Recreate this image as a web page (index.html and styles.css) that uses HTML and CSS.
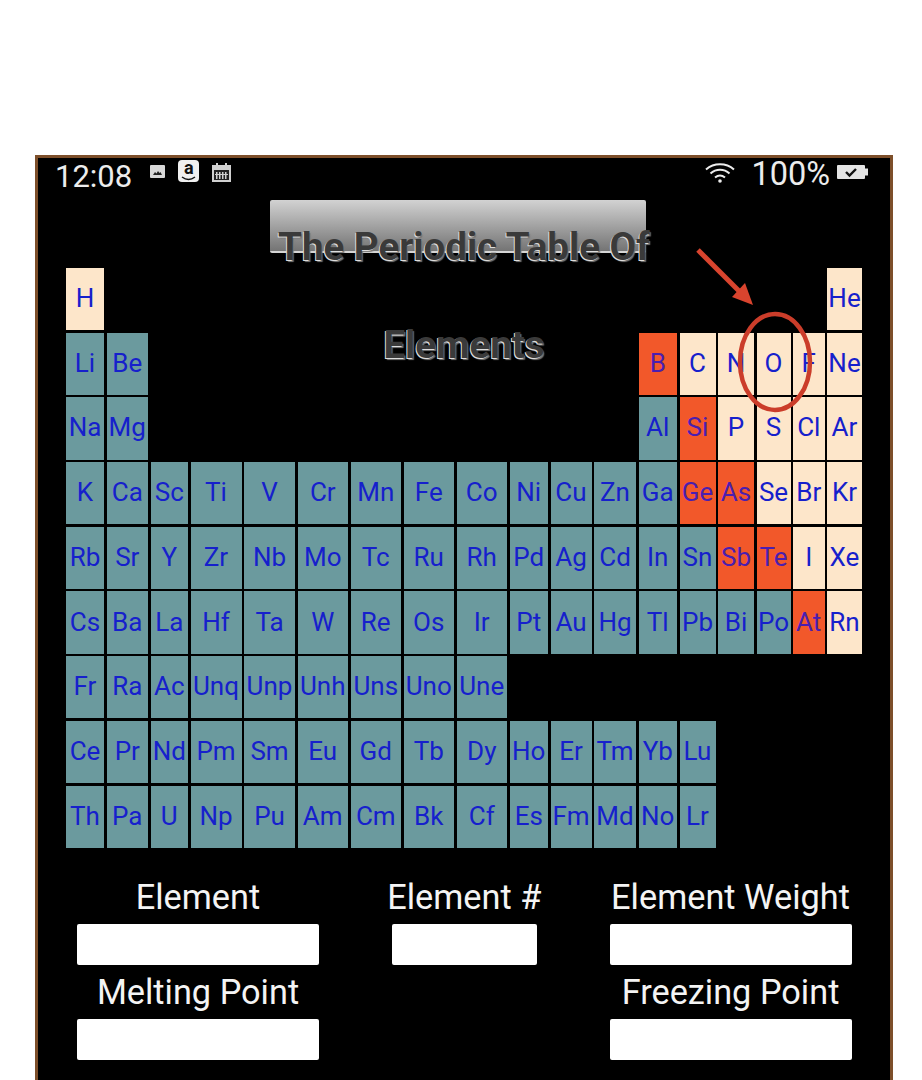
FILE: index.html
```html
<!DOCTYPE html>
<html lang="en">
<head>
<meta charset="utf-8">
<title>The Periodic Table Of Elements</title>
<link rel="stylesheet" href="styles.css">
</head>
<body>
<main class="phone">
  <header class="status">
    <div class="status-left">
      <span class="time">12:08</span>
      <svg class="ico-img" viewBox="0 0 15 13"><rect width="15" height="13" rx="1" fill="#d8d8d8"/><path d="M3 10l2-3 1.500 1.500L8 6l1.500 2 1-1L12 10z" fill="#222"/></svg>
      <span class="ico-amazon"><span class="amazon-a">a</span><svg class="amazon-smile" viewBox="0 0 21 6"><path d="M4 1C8 4 13 4 17 1" fill="none" stroke="#111" stroke-width="1.500"/></svg></span>
      <svg class="ico-cal" viewBox="0 0 19 19"><path d="M4 0h2v2h7V0h2v2h4v17H0V2h4z" fill="#d0d0d0"/><path d="M2 7h15v10H2z" fill="#222"/><path d="M4 9h1.500v7H4zM7 9h1.500v7H7zM10 9h1.500v7H10zM13 9h1.500v7H13zM3 11h13v1H3z" fill="#d0d0d0"/></svg>
    </div>
    <div class="status-right">
      <svg class="ico-wifi" viewBox="0 0 30 21" fill="none" stroke="#ececec" stroke-width="2"><path d="M1 7.500C9 .5 21 .5 29 7.500"/><path d="M5.500 11.500C11 6.500 19 6.500 24.500 11.500"/><path d="M10 15.500C13 13 17 13 20 15.500"/><circle cx="15" cy="19" r="1.800" fill="#ececec" stroke="none"/></svg>
      <span class="batt-pct">100%</span>
      <svg class="ico-batt" viewBox="0 0 31 14"><path d="M0 1a1 1 0 0 1 1-1h26a1 1 0 0 1 1 1v2.500h3v7h-3V13a1 1 0 0 1-1 1H1a1 1 0 0 1-1-1z" fill="#e4e4e4"/><path d="M9 7l3.500 3.500L19 4" fill="none" stroke="#111" stroke-width="2.400"/></svg>
    </div>
  </header>

  <section class="head">
    <div class="title-btn"></div>
    <h1 class="title">The Periodic Table Of<br>Elements</h1>
  </section>

  <section class="table">
    <div class="el n">H</div><div class="el n at18">He</div>
    <div class="el">Li</div><div class="el">Be</div><div class="el s at13">B</div><div class="el n">C</div><div class="el n">N</div><div class="el n">O</div><div class="el n">F</div><div class="el n">Ne</div>
    <div class="el">Na</div><div class="el">Mg</div><div class="el at13">Al</div><div class="el s">Si</div><div class="el n">P</div><div class="el n">S</div><div class="el n">Cl</div><div class="el n">Ar</div>
    <div class="el">K</div><div class="el">Ca</div><div class="el">Sc</div><div class="el">Ti</div><div class="el">V</div><div class="el">Cr</div><div class="el">Mn</div><div class="el">Fe</div><div class="el">Co</div><div class="el">Ni</div><div class="el">Cu</div><div class="el">Zn</div><div class="el">Ga</div><div class="el s">Ge</div><div class="el s">As</div><div class="el n">Se</div><div class="el n">Br</div><div class="el n">Kr</div>
    <div class="el">Rb</div><div class="el">Sr</div><div class="el">Y</div><div class="el">Zr</div><div class="el">Nb</div><div class="el">Mo</div><div class="el">Tc</div><div class="el">Ru</div><div class="el">Rh</div><div class="el">Pd</div><div class="el">Ag</div><div class="el">Cd</div><div class="el">In</div><div class="el">Sn</div><div class="el s">Sb</div><div class="el s">Te</div><div class="el n">I</div><div class="el n">Xe</div>
    <div class="el">Cs</div><div class="el">Ba</div><div class="el">La</div><div class="el">Hf</div><div class="el">Ta</div><div class="el">W</div><div class="el">Re</div><div class="el">Os</div><div class="el">Ir</div><div class="el">Pt</div><div class="el">Au</div><div class="el">Hg</div><div class="el">Tl</div><div class="el">Pb</div><div class="el">Bi</div><div class="el">Po</div><div class="el s">At</div><div class="el n">Rn</div>
    <div class="el">Fr</div><div class="el">Ra</div><div class="el">Ac</div><div class="el">Unq</div><div class="el">Unp</div><div class="el">Unh</div><div class="el">Uns</div><div class="el">Uno</div><div class="el">Une</div>
    <div class="el at1">Ce</div><div class="el">Pr</div><div class="el">Nd</div><div class="el">Pm</div><div class="el">Sm</div><div class="el">Eu</div><div class="el">Gd</div><div class="el">Tb</div><div class="el">Dy</div><div class="el">Ho</div><div class="el">Er</div><div class="el">Tm</div><div class="el">Yb</div><div class="el">Lu</div>
    <div class="el at1">Th</div><div class="el">Pa</div><div class="el">U</div><div class="el">Np</div><div class="el">Pu</div><div class="el">Am</div><div class="el">Cm</div><div class="el">Bk</div><div class="el">Cf</div><div class="el">Es</div><div class="el">Fm</div><div class="el">Md</div><div class="el">No</div><div class="el">Lr</div>
  </section>

  <section class="form">
    <div class="field"><label class="lbl">Element</label><div class="box"></div></div>
    <div class="field"><label class="lbl">Element #</label><div class="box"></div></div>
    <div class="field"><label class="lbl">Element Weight</label><div class="box"></div></div>
    <div class="field"><label class="lbl">Melting Point</label><div class="box"></div></div>
    <div class="field third"><label class="lbl">Freezing Point</label><div class="box"></div></div>
  </section>

  <svg class="callout" viewBox="680 240 150 180" fill="none">
    <path d="M698 250L741 293" stroke="#d9442e" stroke-width="5"/>
    <path d="M753 305L732 297L745 283z" fill="#d9442e"/>
    <ellipse cx="775" cy="362" rx="35" ry="48" stroke="#cb3d2a" stroke-width="4.500"/>
  </svg>
</main>
</body>
</html>
```
FILE: styles.css
```css
* { box-sizing: border-box; }
html, body { margin: 0; background: #fff; }
body { height: 1080px; overflow: hidden; font-family: Roboto, "Liberation Sans", sans-serif; }

.phone {
  position: relative;
  width: 858px;
  height: 925px;
  margin: 155px 0 0 35px;
  background: #000;
  border: 3px solid #7d4f2a;
  border-bottom: 0;
  overflow: hidden;
}

.status {
  display: flex;
  justify-content: space-between;
  height: 42px;
  padding: 0 22px 0 17px;
  color: #ececec;
}
.status-left, .status-right { display: flex; align-items: flex-start; }
.time { font-size: 31px; line-height: 36px; margin-top: 1px; }
.ico-img { width: 15px; height: 13px; margin: 7px 0 0 18px; }
.ico-amazon {
  display: flex;
  flex-direction: column;
  align-items: center;
  width: 21px;
  height: 22px;
  margin: 2px 0 0 13px;
  background: #f0f0f0;
  border-radius: 4px;
}
.amazon-a { height: 16px; font-size: 18px; font-weight: 700; line-height: 16px; color: #111; }
.amazon-smile { width: 21px; height: 6px; }
.ico-cal { width: 19px; height: 19px; margin: 5px 0 0 13px; }
.ico-wifi { width: 30px; height: 21px; margin: 4px 0 0; }
.batt-pct { font-size: 32.500px; line-height: 33px; margin: 0 0 0 16px; }
.ico-batt { width: 31px; height: 14px; margin: 7px 0 0 7px; }

.head { position: relative; height: 68px; }
.title-btn {
  width: 376px;
  height: 53px;
  margin-left: 232px;
  background: linear-gradient(#d2d2d2, #747474);
  border-bottom: 2px solid #d5d5d5;
  border-radius: 2px;
}
.title {
  position: absolute;
  left: 0;
  top: -2px;
  width: 100%;
  margin: 0;
  text-align: center;
  font-size: 38.500px;
  font-weight: 700;
  line-height: 98px;
  color: #3a3a3a;
  text-shadow: -1px 1px 0 #ddd, 1px 2px 1px #777;
}

.table {
  display: grid;
  grid-template-columns: 38px 41.500px 37.500px 51px 51px 50.500px 50.500px 50.500px 50.500px 38.500px 41px 42px 38.500px 36px 36px 34px 31.500px 35px;
  grid-auto-rows: 62.200px;
  gap: 2.500px;
  margin-left: 28px;
  font-size: 26px;
}
.el {
  display: flex;
  align-items: center;
  justify-content: center;
  padding-bottom: 2px;
  background: #6b9a9e;
  color: #1620cc;
  white-space: nowrap;
}
.el.n { background: #fde6ca; }
.el.s { background: #f2582a; color: #4a1eb0; }
.at13 { grid-column-start: 13; }
.at18 { grid-column-start: 18; }
.at1 { grid-column-start: 1; }

.form {
  display: grid;
  grid-template-columns: 242px 144.500px 242px;
  column-gap: 73px;
  margin: 22px 0 0 39px;
}
.field { display: flex; flex-direction: column; align-items: center; }
.third { grid-column-start: 3; }
.lbl { color: #f4f4f4; font-size: 34.300px; line-height: 54px; height: 54px; white-space: nowrap; }
.box { width: 100%; height: 41px; background: #fff; border-radius: 2px; }

.callout {
  position: absolute;
  left: 642px;
  top: 82px;
  width: 150px;
  height: 180px;
}
```
